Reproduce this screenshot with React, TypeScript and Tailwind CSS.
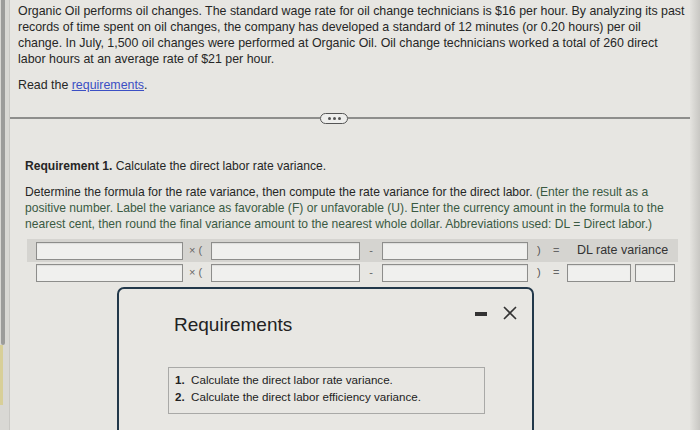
import React from "react";

const Input = ({ w }: { w: string }) => (
  <div className={`${w} h-[18px] shrink-0 border border-[#8d8d8b] bg-[#f0f0ee] shadow-[inset_0_1px_1px_rgba(0,0,0,0.08)]`} />
);

export default function App() {
  return (
    <div
      className="w-[700px] h-[430px] overflow-hidden flex bg-[#e7e6e2] text-[#262626] relative"
      style={{ fontFamily: '"Liberation Sans", Arial, sans-serif' }}
    >
      {/* left strip with scrollbar */}
      <div className="w-[10px] shrink-0 h-full bg-[#d9d8d4] flex flex-col border-r border-[#c9c8c4]">
        <div className="ml-[1px] w-[4px] h-[345px] bg-[#9c9c9a] rounded-b-sm" />
        <div className="w-[3px] h-[60px] bg-[#d8cf98]" />
      </div>

      {/* main */}
      <div className="flex-1 min-w-0 flex flex-col">
        <div className="pl-[8px] pt-[3px] text-[12.4px] leading-[16px]">
          <div className="whitespace-nowrap">Organic Oil performs oil changes. The standard wage rate for oil change technicians is $16 per hour. By analyzing its past</div>
          <div className="whitespace-nowrap">records of time spent on oil changes, the company has developed a standard of 12 minutes (or 0.20 hours) per oil</div>
          <div className="whitespace-nowrap">change. In July, 1,500 oil changes were performed at Organic Oil. Oil change technicians worked a total of 260 direct</div>
          <div className="whitespace-nowrap">labor hours at an average rate of $21 per hour.</div>
          <div className="mt-[10px] whitespace-nowrap">
            Read the <span className="text-[#3b4fc4] underline">requirements</span>.
          </div>
        </div>

        {/* divider */}
        <div className="mt-[19px] h-[12px] flex items-center">
          <div className="w-[310px] shrink-0 h-[1.5px] bg-[#8e8e8c]" />
          <div className="w-[28px] shrink-0 h-[11px] rounded-full border-[1.5px] border-[#555] bg-[#eeeeec] flex items-center justify-center gap-[2px]">
            <span className="w-[3px] h-[3px] rounded-full bg-[#555]" />
            <span className="w-[3px] h-[3px] rounded-full bg-[#555]" />
            <span className="w-[3px] h-[3px] rounded-full bg-[#555]" />
          </div>
          <div className="w-[342px] shrink-0 h-[1.5px] bg-[#8e8e8c]" />
        </div>

        <div className="pl-[15px] mt-[34px] text-[12.1px] leading-[16px]">
          <div className="whitespace-nowrap">
            <span className="font-bold">Requirement 1.</span> Calculate the direct labor rate variance.
          </div>
          <div className="mt-[10px] whitespace-nowrap">
            Determine the formula for the rate variance, then compute the rate variance for the direct labor. <span className="text-[#3a5a42]">(Enter the result as a</span>
          </div>
          <div className="whitespace-nowrap text-[#3a5a42]">positive number. Label the variance as favorable (F) or unfavorable (U). Enter the currency amount in the formula to the</div>
          <div className="whitespace-nowrap text-[#3a5a42]">nearest cent, then round the final variance amount to the nearest whole dollar. Abbreviations used: DL = Direct labor.)</div>
        </div>

        {/* formula rows */}
        <div className="ml-[17px] mt-[7px] w-[651px] flex flex-col text-[11px]">
          <div className="h-[23px] bg-[#d5d4d0] flex items-center pl-[9px]">
            <Input w="w-[147px]" />
            <span className="w-[28px] shrink-0 pl-[6px] text-[#666]">× (</span>
            <Input w="w-[149px]" />
            <span className="w-[22px] shrink-0 text-center text-[#666]">-</span>
            <Input w="w-[146px]" />
            <span className="w-[12px] shrink-0 pl-[9px] text-[#555]">)</span>
            <span className="w-[37px] shrink-0 pl-[13px] text-[#666]">=</span>
            <span className="text-[12.5px] text-[#333] whitespace-nowrap">DL rate variance</span>
          </div>
          <div className="h-[21px] flex items-center pl-[9px]">
            <Input w="w-[147px]" />
            <span className="w-[28px] shrink-0 pl-[6px] text-[#666]">× (</span>
            <Input w="w-[149px]" />
            <span className="w-[22px] shrink-0 text-center text-[#666]">-</span>
            <Input w="w-[146px]" />
            <span className="w-[12px] shrink-0 pl-[9px] text-[#555]">)</span>
            <span className="w-[27px] shrink-0 pl-[13px] text-[#666]">=</span>
            <Input w="w-[64px]" />
            <div className="w-[4px] shrink-0" />
            <Input w="w-[40px]" />
          </div>
        </div>
      </div>

      {/* right edge */}
      <div className="w-[10px] shrink-0 h-full bg-gradient-to-r from-[#e4e3df] to-[#c8c7c3]" />

      {/* Requirements modal */}
      <div className="absolute left-[117px] top-[287px] w-[417px] h-[160px] rounded-[7px] border-[2.5px] border-[#22384a] bg-[#e8e7e3]">
        <div className="relative">
          <div className="absolute left-[356px] top-[23px] w-[12px] h-[4px] bg-[#333]" />
          <svg className="absolute left-[384px] top-[17px]" width="14" height="14" viewBox="0 0 14 14">
            <path d="M1 1 L13 13 M13 1 L1 13" stroke="#333" strokeWidth="1.6" />
          </svg>
        </div>
        <div className="pl-[55px] pt-[24px] text-[19px] leading-[24px] text-[#222]">Requirements</div>
        <div className="ml-[49px] mt-[30px] w-[317px] h-[47px] border border-[#a9a9a7] text-[11.6px] leading-[17px] pl-[6px] pt-[3px] text-[#222]">
          <div className="whitespace-nowrap"><span className="font-bold">1.</span>&nbsp; Calculate the direct labor rate variance.</div>
          <div className="whitespace-nowrap"><span className="font-bold">2.</span>&nbsp; Calculate the direct labor efficiency variance.</div>
        </div>
      </div>
    </div>
  );
}
